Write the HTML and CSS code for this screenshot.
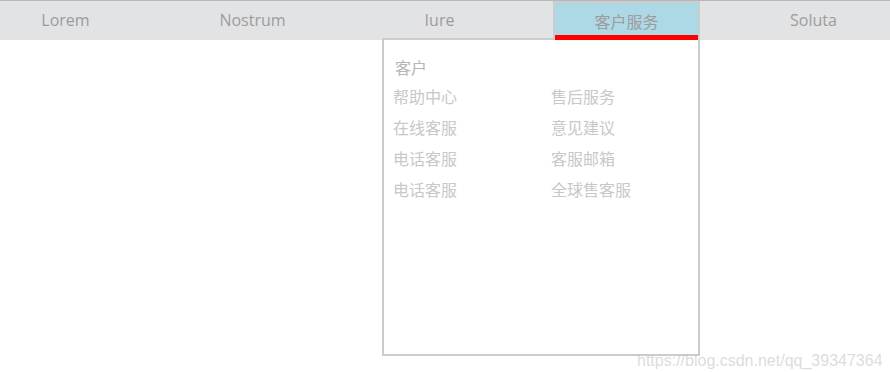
FILE: index.html
```html
<!DOCTYPE html>
<html lang="zh-CN">
<head>
<meta charset="utf-8">
<title>Nav</title>
<link rel="stylesheet" href="styles.css">
</head>
<body>
<nav class="navbar">
  <ul class="nav-list">
    <li class="nav-item">Lorem</li>
    <li class="nav-item">Nostrum</li>
    <li class="nav-item">Iure</li>
    <li class="nav-item active">客户服务
      <div class="dropdown">
        <div class="dropdown-title">客户</div>
        <ul class="dropdown-grid">
          <li>帮助中心</li>
          <li>售后服务</li>
          <li>在线客服</li>
          <li>意见建议</li>
          <li>电话客服</li>
          <li>客服邮箱</li>
          <li>电话客服</li>
          <li>全球售客服</li>
        </ul>
      </div>
    </li>
    <li class="nav-item">Soluta</li>
  </ul>
</nav>
<div class="watermark">https://blog.csdn.net/qq_39347364</div>
</body>
</html>
```

FILE: styles.css
```css
html, body {
  margin: 0;
  padding: 0;
  background: #fff;
}

body {
  font-family: "Open Sans", "Noto Sans CJK SC", sans-serif;
  position: relative;
  height: 372px;
  overflow: hidden;
}

.navbar {
  border-top: 1px solid #b8b8b8;
  background: #e2e3e5;
  height: 39px;
}

.nav-list {
  list-style: none;
  margin: 0 0 0 -8px;
  padding: 0;
  display: flex;
  gap: 40px;
}

.nav-item {
  box-sizing: border-box;
  width: 147px;
  height: 39px;
  line-height: 39px;
  text-align: center;
  font-size: 16px;
  color: #9c9c9c;
  flex: none;
}

.nav-item.active {
  position: relative;
  background: #add8e6;
  border: 2px solid #cccccc;
  border-bottom: none;
  line-height: 36px;
  font-family: "Noto Sans CJK SC", sans-serif;
}

.nav-item.active::after {
  content: "";
  position: absolute;
  left: 0;
  right: 0;
  bottom: 0;
  height: 5px;
  background: #ff0000;
  z-index: 2;
}

.dropdown {
  position: absolute;
  top: 35px;
  left: -173px;
  width: 318px;
  height: 318px;
  box-sizing: border-box;
  border: 2px solid #cccccc;
  background: #fff;
  z-index: 1;
  padding: 15px 0 0 9px;
  text-align: left;
  font-family: "Noto Sans CJK SC", sans-serif;
  font-size: 16px;
}

.dropdown-title {
  line-height: 24px;
  margin: 0 0 2px 2px;
  color: #b5b5b5;
}

.dropdown-grid {
  list-style: none;
  margin: 0;
  padding: 0;
  display: grid;
  grid-template-columns: 158px auto;
}

.dropdown-grid li {
  line-height: 31px;
  color: #c8c8c8;
}

.watermark {
  position: absolute;
  left: 637px;
  top: 352px;
  font-family: "Liberation Sans", Arial, sans-serif;
  font-size: 16px;
  color: rgba(190, 190, 190, 0.55);
  white-space: nowrap;
  z-index: 5;
}
```
